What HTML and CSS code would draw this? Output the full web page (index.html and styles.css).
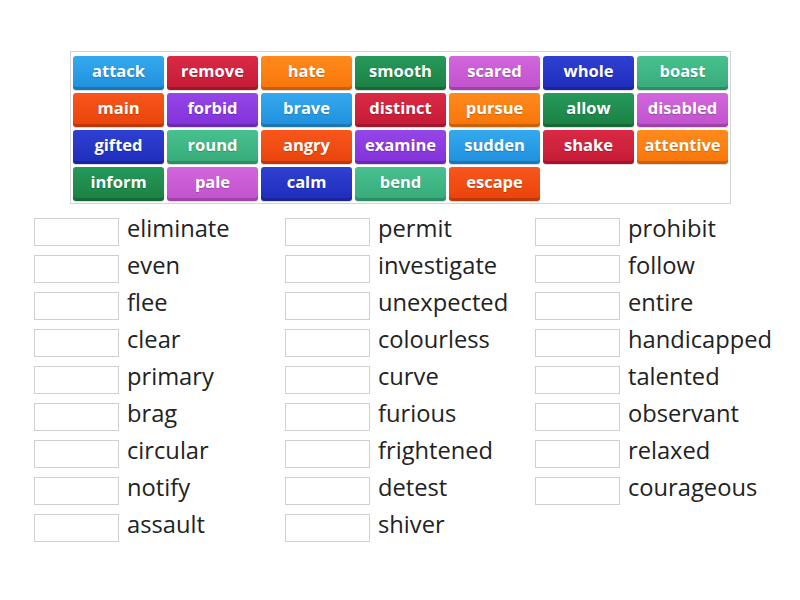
FILE: index.html
```html
<!DOCTYPE html>
<html>
<head>
<meta charset="utf-8">
<link rel="stylesheet" href="styles.css">
</head>
<body>
<div class="board">
  <div class="tile c1">attack</div>
  <div class="tile c2">remove</div>
  <div class="tile c3">hate</div>
  <div class="tile c4">smooth</div>
  <div class="tile c5">scared</div>
  <div class="tile c6">whole</div>
  <div class="tile c7">boast</div>
  <div class="tile c8">main</div>
  <div class="tile c9">forbid</div>
  <div class="tile c1">brave</div>
  <div class="tile c2">distinct</div>
  <div class="tile c3">pursue</div>
  <div class="tile c4">allow</div>
  <div class="tile c5">disabled</div>
  <div class="tile c6">gifted</div>
  <div class="tile c7">round</div>
  <div class="tile c8">angry</div>
  <div class="tile c9">examine</div>
  <div class="tile c1">sudden</div>
  <div class="tile c2">shake</div>
  <div class="tile c3">attentive</div>
  <div class="tile c4">inform</div>
  <div class="tile c5">pale</div>
  <div class="tile c6">calm</div>
  <div class="tile c7">bend</div>
  <div class="tile c8">escape</div>
</div>
<div class="answers">
  <div class="col">
    <div class="row"><span class="box"></span><span class="word">eliminate</span></div>
    <div class="row"><span class="box"></span><span class="word">even</span></div>
    <div class="row"><span class="box"></span><span class="word">flee</span></div>
    <div class="row"><span class="box"></span><span class="word">clear</span></div>
    <div class="row"><span class="box"></span><span class="word">primary</span></div>
    <div class="row"><span class="box"></span><span class="word">brag</span></div>
    <div class="row"><span class="box"></span><span class="word">circular</span></div>
    <div class="row"><span class="box"></span><span class="word">notify</span></div>
    <div class="row"><span class="box"></span><span class="word">assault</span></div>
  </div>
  <div class="col">
    <div class="row"><span class="box"></span><span class="word">permit</span></div>
    <div class="row"><span class="box"></span><span class="word">investigate</span></div>
    <div class="row"><span class="box"></span><span class="word">unexpected</span></div>
    <div class="row"><span class="box"></span><span class="word">colourless</span></div>
    <div class="row"><span class="box"></span><span class="word">curve</span></div>
    <div class="row"><span class="box"></span><span class="word">furious</span></div>
    <div class="row"><span class="box"></span><span class="word">frightened</span></div>
    <div class="row"><span class="box"></span><span class="word">detest</span></div>
    <div class="row"><span class="box"></span><span class="word">shiver</span></div>
  </div>
  <div class="col">
    <div class="row"><span class="box"></span><span class="word">prohibit</span></div>
    <div class="row"><span class="box"></span><span class="word">follow</span></div>
    <div class="row"><span class="box"></span><span class="word">entire</span></div>
    <div class="row"><span class="box"></span><span class="word">handicapped</span></div>
    <div class="row"><span class="box"></span><span class="word">talented</span></div>
    <div class="row"><span class="box"></span><span class="word">observant</span></div>
    <div class="row"><span class="box"></span><span class="word">relaxed</span></div>
    <div class="row"><span class="box"></span><span class="word">courageous</span></div>
  </div>
</div>
</body>
</html>
```
FILE: styles.css
```css
html, body {
  margin: 0;
  padding: 0;
  background: #fff;
  font-family: "Open Sans", "Liberation Sans", sans-serif;
}
body {
  width: 800px;
  height: 600px;
  overflow: hidden;
}
.board {
  margin: 51px 0 0 70px;
  width: 655px;
  padding: 4px 2px 2px 2px;
  border: 1px solid #d4d4d4;
  display: grid;
  grid-template-columns: repeat(7, 91px);
  grid-auto-rows: 34px;
  gap: 3px;
}
.tile {
  border-radius: 3px;
  color: #fff;
  font-weight: 700;
  font-size: 16.5px;
  display: flex;
  align-items: center;
  justify-content: center;
  padding-bottom: 6px;
  box-sizing: border-box;
  text-shadow: 0 1px 1px rgba(0,0,0,0.2);
  box-shadow: inset 0 -3px 0 rgba(0,0,0,0.18), 0 1px 1px rgba(0,0,0,0.15);
}
.c1 { background: linear-gradient(#35a9ee, #1f8fdc); }
.c2 { background: linear-gradient(#da2a45, #c41a35); }
.c3 { background: linear-gradient(#ff8a1c, #f87508); }
.c4 { background: linear-gradient(#26995a, #1b7f43); }
.c5 { background: linear-gradient(#d266dc, #c052cd); }
.c6 { background: linear-gradient(#2e40d2, #1f2cbc); }
.c7 { background: linear-gradient(#48c08f, #36ab79); }
.c8 { background: linear-gradient(#f8561c, #e9430a); }
.c9 { background: linear-gradient(#9546e8, #8131d8); }
.answers {
  display: grid;
  grid-template-columns: 251px 250px 250px;
  margin: 14px 0 0 34px;
}
.col {
  display: flex;
  flex-direction: column;
  gap: 9px;
}
.row {
  display: flex;
  align-items: center;
  height: 28px;
}
.box {
  width: 85px;
  height: 28px;
  box-sizing: border-box;
  border: 1px solid #d0d0d0;
  background: #fff;
  flex: none;
}
.word {
  margin-left: 8px;
  font-size: 23.7px;
  color: #222;
  white-space: nowrap;
  line-height: 28px;
  padding-bottom: 9px;
}
```
